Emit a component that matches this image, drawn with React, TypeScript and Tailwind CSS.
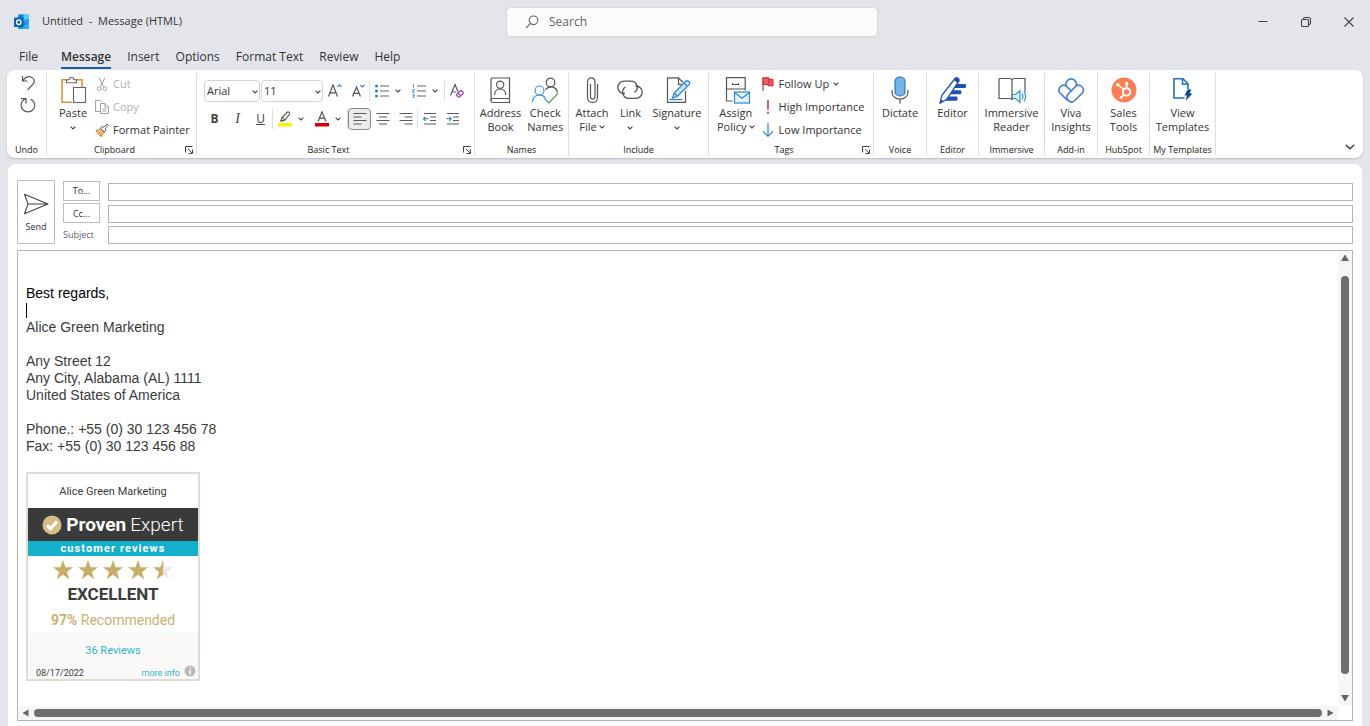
import type { ReactNode } from "react";

type IconProps = {
  className?: string;
};

const tabs = [
  "Message",
  "Insert",
  "Options",
  "Format Text",
  "Review",
  "Help",
];

function Chevron({ className = "" }: IconProps) {
  return (
    <svg
      viewBox="0 0 6 4"
      aria-hidden="true"
      className={`inline-block h-1 w-1.5 shrink-0 ${className}`}
      fill="none"
      stroke="#444"
      strokeWidth="1.1"
    >
      <path d="M.6.7 3 3 5.4.7" />
    </svg>
  );
}

function OutlookLogo() {
  return (
    <svg viewBox="0 0 16 16" className="h-4 w-4" aria-hidden="true">
      <path d="M4 1.5A1 1 0 0 1 5 .5h9a1 1 0 0 1 1 1V9H4z" fill="#28a8ea" />
      <path d="M4 1.5A1 1 0 0 1 5 .5h4.7V5H4z" fill="#0f86d8" />
      <path d="M9.7.5H14a1 1 0 0 1 1 1V5H9.700z" fill="#50d0f8" />
      <path d="M4 8l11-.5V14a1 1 0 0 1-1 1H5a1 1 0 0 1-1-1z" fill="#1490df" />
      <path d="M15 7.5 7 15h7a1 1 0 0 0 1-1z" fill="#2ab0f0" />
      <rect y="3.5" width="9.5" height="9.5" rx="1" fill="#0a62b8" />
      <ellipse
        cx="4.75"
        cy="8.2"
        rx="2.2"
        ry="2.3"
        fill="none"
        stroke="#fff"
        strokeWidth="1.3"
      />
    </svg>
  );
}

function UndoIcon() {
  return (
    <svg viewBox="0 0 16 16" className="h-4 w-4" fill="none" stroke="#555" strokeWidth="1.2">
      <path d="M2.500 1v5h5M2.700 5.800C5 2.500 8 1 11 2c3.500 1.200 4.300 4.800 2 7.200L7.500 15" />
    </svg>
  );
}

function RedoIcon() {
  return (
    <svg viewBox="0 0 16 16" className="h-4 w-4" fill="none" stroke="#555" strokeWidth="1.2">
      <path d="M1 1.600h5v5M6 1.800C2.500 3 1 5.500 1.100 8.500a6.800 6.400 0 0 0 13.600 0C14.700 5.500 13 3.200 10.500 2.200" />
    </svg>
  );
}

function PasteIcon() {
  return (
    <svg viewBox="0 0 28 28" className="h-7 w-7" fill="none">
      <path d="M8 3.800H3v22.400h10M17 3.800h6V11" stroke="#e8912d" strokeWidth="1.6" />
      <path
        d="M7.500 6.800V3.700h2.700c.2-1.500 1-2.400 2.300-2.400s2.100.9 2.300 2.400h2.700v3.100z"
        fill="#fff"
        stroke="#666"
        strokeWidth="1.1"
      />
      <rect x="14.5" y="11.5" width="12" height="15" fill="#fff" stroke="#666" strokeWidth="1.1" />
    </svg>
  );
}

function CutIcon() {
  return (
    <svg viewBox="0 0 14 14" className="h-3.5 w-3.5" fill="none" stroke="#a3a3a3">
      <path d="M4 .5 8.700 9.800M10 .5 5.300 9.800" />
      <circle cx="4.2" cy="11.6" r="1.9" />
      <circle cx="9.8" cy="11.6" r="1.9" />
    </svg>
  );
}

function CopyIcon() {
  return (
    <svg viewBox="0 0 14 14" className="h-3.5 w-3.5" fill="none" stroke="#a3a3a3">
      <path d="M5 11.500H.5V.5H5l1.500 1.500" />
      <path d="M5.500 3.500h4.500l3.500 3.500v6.500h-8zM9.800 3.500V7h3.700M7.500 9h4M7.500 11h4" />
    </svg>
  );
}

function PainterIcon() {
  return (
    <svg viewBox="0 0 14 14" className="h-3.5 w-3.5" fill="none">
      <path
        d="M1 7.500c2 0 3.500-.8 4.500-2l3.500 4c-1.200 1.200-2 2.300-2.200 4C4.500 12.500 2.500 10.500 1 7.500z"
        fill="#f7c48b"
        stroke="#d9781e"
      />
      <path d="m3.500 10 2-1.500M5.200 12l1.800-1.600" stroke="#d9781e" />
      <path d="m5.500 5.200 1.400-1.600 2 .6L12 1l1.300 1.400-3 3 .3 2L9.200 9.200z" fill="#fff" stroke="#555" />
    </svg>
  );
}

function LauncherIcon() {
  return (
    <svg viewBox="0 0 8 8" className="h-2 w-2" fill="none" stroke="#444">
      <path d="M.5 6.500v-6h7M3 3l4 4M7.500 3.500v4h-4" />
    </svg>
  );
}

function GrowFontIcon({ shrink = false }: { shrink?: boolean }) {
  return (
    <svg viewBox="0 0 16 16" className="h-4 w-4" fill="none">
      {shrink ? (
        <>
          <path d="M2.500 13.500 6.500 4l4 9.500M4 10.300h5" stroke="#555" strokeWidth="1.2" />
          <path d="m10.500 2 2 2 2-2" stroke="#2b7fc4" strokeWidth="1.1" />
        </>
      ) : (
        <>
          <path d="M1.500 13.500 6 2l4.500 11.500M3.100 9.800h5.800" stroke="#555" strokeWidth="1.2" />
          <path d="m10.500 3.800 2-2 2 2" stroke="#2b7fc4" strokeWidth="1.1" />
        </>
      )}
    </svg>
  );
}

function BulletsIcon() {
  return (
    <svg viewBox="0 0 14 14" className="h-3.5 w-3.5">
      <path d="M5 2h9M5 7h9M5 12h9" stroke="#666" strokeWidth="1.2" />
      <g fill="#2b7fc4">
        <circle cx="1.5" cy="2" r="1.5" />
        <circle cx="1.5" cy="7" r="1.5" />
        <circle cx="1.5" cy="12" r="1.5" />
      </g>
    </svg>
  );
}

function NumberingIcon() {
  return (
    <svg viewBox="0 0 14 14" className="h-3.5 w-3.5" fill="none">
      <path d="M5 2h9M5 7h9M5 12h9" stroke="#666" strokeWidth="1.2" />
      <path
        d="M.6.8 1.600.3v3.400M.5 5.500h1.600v1.400H.7v1.500h1.600M.5 10.300h1.700v1.500H.8M2.200 11.800v1.700H.5"
        stroke="#2b7fc4"
        strokeWidth=".8"
      />
    </svg>
  );
}

function ClearFormatIcon() {
  return (
    <svg viewBox="0 0 16 16" className="h-4 w-4" fill="none">
      <path d="M1.500 12.500 6 1.500l3 7M3.200 9h4.200" stroke="#555" strokeWidth="1.2" />
      <path
        d="M7.200 11.800 11 8q.9-.9 1.800 0l1 1q.9.9 0 1.800L10.500 14H9zM9 10l3 3"
        stroke="#9b3fb0"
        strokeWidth="1.2"
      />
    </svg>
  );
}

function HighlightIcon() {
  return (
    <svg viewBox="0 0 16 16" className="h-4 w-4" fill="none">
      <path
        d="m4 10 1-3.500L10.500 1c.8-.6 2.600.8 2 2L8 9l-2.500 1zM5.200 6.500l2.700 2.400"
        stroke="#555"
        strokeWidth="1.1"
      />
      <path d="m2.500 10.500 2-2 2 1.600z" fill="#555" />
      <path d="M1 12h14v3.500H1z" fill="#fdf000" />
    </svg>
  );
}

function FontColorIcon() {
  return (
    <svg viewBox="0 0 16 16" className="h-4 w-4" fill="none">
      <path d="M4 10.500 8 .8l4 9.700M5.400 7.200h5.200" stroke="#555" strokeWidth="1.2" />
      <path d="M1 12h14v3.500H1z" fill="#d9000d" />
    </svg>
  );
}

function AlignIcon({ d }: { d: string }) {
  return (
    <svg viewBox="0 0 14 14" className="h-3.5 w-3.5" fill="none" stroke="#5a5a5a" strokeWidth="1.1">
      <path d={d} />
    </svg>
  );
}

function IndentIcon({ arrow }: { arrow: string }) {
  return (
    <svg viewBox="0 0 14 14" className="h-3.5 w-3.5" fill="none" strokeWidth="1.1">
      <path d="M1 1.500h12M7 5h6M7 8.500h6M1 12h12" stroke="#5a5a5a" />
      <path d={arrow} stroke="#2b7fc4" />
    </svg>
  );
}

function AddressBookIcon() {
  return (
    <svg viewBox="0 0 28 28" className="h-7 w-7" fill="none" stroke="#555" strokeWidth="1.2">
      <path d="M5 24V3.500c0-1 .8-1.500 1.500-1.500h17v24.500H7A2 2 0 0 1 5 24.500c0-1.500 1-2 2-2h16.500" />
      <circle cx="14.2" cy="8.7" r="3.6" />
      <path d="M8.500 19c.3-4 2.300-6 5.700-6s5.400 2 5.700 6" />
    </svg>
  );
}

function CheckNamesIcon() {
  return (
    <svg viewBox="0 0 28 28" className="h-7 w-7" fill="none" strokeWidth="1.2">
      <circle cx="19.5" cy="6.5" r="4.3" stroke="#555" />
      <path d="M14.500 13.500c3-3.500 8-3.500 10.500-.5.800 1 1.300 2.200 1.500 3.500" stroke="#555" />
      <circle cx="8.5" cy="14.5" r="4.5" stroke="#3a8dd4" />
      <path d="M1.500 26c.3-4.500 3-7 7-7 2.500 0 4.500 1 5.700 3" stroke="#3a8dd4" />
      <path d="m13.500 22.500 4.300 4.300L27 17.500" stroke="#4c9a55" />
    </svg>
  );
}

function AttachIcon() {
  return (
    <svg viewBox="0 0 28 28" className="h-7 w-7" fill="none" stroke="#555" strokeWidth="1.2">
      <path d="M19.500 8v13.500c0 6.700-10 6.700-10 0V6c0-5.500 7.500-5.500 7.500 0v14.500c0 3.300-4.500 3.300-4.500 0V8" />
    </svg>
  );
}

function LinkIcon() {
  return (
    <svg viewBox="0 0 28 28" className="h-7 w-7" fill="none" stroke="#555" strokeWidth="1.3">
      <path d="M9 17.500H8a6.200 6.200 0 0 1 0-12.400h7a6.200 6.200 0 0 1 3.500 11.300" />
      <path d="M19.500 10H20a6.200 6.200 0 0 1 0 12.400h-7A6.200 6.200 0 0 1 9.500 11" />
    </svg>
  );
}

function SignatureIcon() {
  return (
    <svg viewBox="0 0 28 28" className="h-7 w-7" fill="none" strokeWidth="1.2">
      <path d="M22.500 15v11.400h-18V1.800h11l4.500 4.700M15.500 1.800v6.500h3" stroke="#555" />
      <path
        d="m9.500 22 1.600-5L23 5c1.500-1.300 4.800 1.500 3.300 3.300L14.500 20.200zM21 7l3.300 3.300M11 17l3.500 3.200"
        fill="#cfe5f7"
        stroke="#2b83cc"
      />
      <path d="M6.500 23.500h13" stroke="#2b83cc" />
    </svg>
  );
}

function PolicyIcon() {
  return (
    <svg viewBox="0 0 28 28" className="h-7 w-7" fill="none" strokeWidth="1.2">
      <path d="M10.500 25H4.500V1.600h18.700v13M4.500 13h18.700M10.500 7v1.500h6V7" stroke="#555" />
      <rect x="12.5" y="16" width="15" height="11" fill="#e5f3fc" stroke="#2b8ad0" />
      <path d="m12.500 16.500 7.500 5.700 7.500-5.700" stroke="#2b8ad0" />
    </svg>
  );
}

function FlagIcon() {
  return (
    <svg viewBox="0 0 14 14" className="h-3.5 w-3.5" fill="none">
      <path d="M2 .5V14" stroke="#9c3540" strokeWidth="1.1" />
      <path d="M2 .8h6v1.500h4v6.500H7V7.500H2z" fill="#ef5c62" stroke="#cf2932" />
      <path d="M8 2.300V7" stroke="#cf2932" />
    </svg>
  );
}

function HighIcon() {
  return (
    <svg viewBox="0 0 14 14" className="h-3.5 w-3.5" fill="none" stroke="#d0393f" strokeWidth="1.6">
      <path d="M7 0v9.700M7 11.800V14" />
    </svg>
  );
}

function LowIcon() {
  return (
    <svg viewBox="0 0 14 14" className="h-3.5 w-3.5" fill="none" stroke="#2b83cc" strokeWidth="1.2">
      <path d="M7 0v13M2 8.300l5 5 5-5" />
    </svg>
  );
}

function DictateIcon() {
  return (
    <svg viewBox="0 0 28 28" className="h-7 w-7" fill="none" strokeWidth="1.2">
      <rect x="9" y="1" width="10" height="19" rx="4.5" fill="#74b5e8" stroke="#2b78b8" />
      <path d="M6 14v2c0 9.500 16 9.500 16 0v-2M14 23.200v4.300" stroke="#555" />
    </svg>
  );
}

function EditorIcon() {
  return (
    <svg viewBox="0 0 28 28" className="h-7 w-7" fill="none">
      <path
        d="M17 8h9c1.500 0 1.500 4 0 4H14zM12.500 14.200h8.800c1.500 0 1.500 4 0 4h-12zM8.500 20.500h9c1.500 0 1.500 4.200 0 4.200H5z"
        fill="#1d4fb4"
      />
      <path
        d="m1 27 1.800-7.500L16 2.500c1.500-1.800 5 .5 3.800 2.700L7.500 23.500z"
        fill="#fff"
        stroke="#1d4fb4"
        strokeWidth="1.3"
      />
      <path d="m1 27 .9-3.500 2.300 1.600zM15.500 3c1.700-2.300 5.700.3 4.400 2.500l-1 1.500L14.500 4z" fill="#1d4fb4" />
    </svg>
  );
}

function ReaderIcon() {
  return (
    <svg viewBox="0 0 28 28" className="h-7 w-7" fill="none" strokeWidth="1.2">
      <path
        d="M1 2.500h10c1.700 0 3 .8 3 2 0-1.200 1.300-2 3-2h10v13M14 4.500v19M14 24c0-1-1.300-1.500-3-1.500H1v-20"
        stroke="#555"
      />
      <path d="M14.500 18.500h3l4.500-4v12l-4.500-4h-3z" fill="#dff1fb" stroke="#2f94c4" />
      <path d="M24 17.500c1.200 2 1.200 4 0 6M26 15.500c2 3 2 7 0 10" stroke="#2f94c4" />
    </svg>
  );
}

function VivaIcon() {
  return (
    <svg viewBox="0 0 28 28" className="h-7 w-7" fill="none" stroke="#4b80dc" strokeWidth="1.7">
      <path d="M18.300 24 L25.300 17 A4.700 4.700 0 0 0 18.700 10.400 L10.900 18.200 A4.700 4.700 0 0 0 17.500 24.800z" />
      <path d="M10.800 24.700 3 17A4.700 4.700 0 0 1 9.600 10.400L14.200 14.900" />
      <path d="M9.200 10.100A5.300 5.300 0 1 1 19.100 10.100" />
    </svg>
  );
}

function HubSpotIcon() {
  return (
    <svg viewBox="0 0 28 28" className="h-7 w-7" fill="none">
      <circle cx="14" cy="14" r="12.5" fill="#fa8058" />
      <circle cx="16.5" cy="16" r="3.7" stroke="#fff" strokeWidth="2" />
      <path d="m8 9 6 4.500M16.700 12V8M13.800 19l-2.500 2.500" stroke="#fff" strokeWidth="1.5" />
      <g fill="#fff">
        <circle cx="7.8" cy="8.8" r="1.7" />
        <circle cx="16.7" cy="7.3" r="1.6" />
        <circle cx="11" cy="21.6" r="1.3" />
      </g>
    </svg>
  );
}

function TemplatesIcon() {
  return (
    <svg viewBox="0 0 28 28" className="h-7 w-7" fill="none">
      <path d="M16.500 22H6V2.800h9l5 5V13M14.500 3v5.300h5.300" stroke="#2472b8" strokeWidth="1.6" />
      <path d="M19.500 13.500h3.800l-1.500 4h2.700l-7 7.500 1.500-5.500h-2.500z" fill="#0f4c8c" />
    </svg>
  );
}

function SendIcon() {
  return (
    <svg viewBox="0 0 26 22" className="h-[22px] w-[26px]" fill="none" stroke="#444" strokeWidth="1.1">
      <path d="M1.500 1.200 25 11 1.500 20.800 5 11zM5 11h20" strokeLinejoin="round" />
    </svg>
  );
}

type GroupProps = {
  label: string;
  className: string;
  launcher?: boolean;
  children: ReactNode;
};

function Group({ label, className, launcher = false, children }: GroupProps) {
  return (
    <section
      aria-label={label}
      className={`flex shrink-0 flex-col border-r border-[#dedede] ${className}`}
    >
      <div className="flex flex-1 justify-center">{children}</div>
      <div className="flex h-3 items-center">
        <span className="flex-1 text-center text-[9px] leading-3 whitespace-nowrap text-[#222]">
          {label}
        </span>
        {launcher && (
          <button
            type="button"
            aria-label={`${label} settings`}
            className="flex w-3.5 justify-center"
          >
            <LauncherIcon />
          </button>
        )}
      </div>
    </section>
  );
}

type BigButtonProps = {
  icon: ReactNode;
  lines: string[];
  menu?: "inline" | "below";
};

function BigButton({ icon, lines, menu }: BigButtonProps) {
  return (
    <button
      type="button"
      className="flex flex-col items-center pt-[3px] text-[11px] leading-[14px] whitespace-nowrap"
    >
      {icon}
      <span className="mt-0.5 flex flex-col items-center">
        {lines.map((line, index) => (
          <span key={line} className="flex items-center gap-0.5">
            {line}
            {menu === "inline" && index === lines.length - 1 && <Chevron />}
          </span>
        ))}
        {menu === "below" && <Chevron className="mt-1.5" />}
      </span>
    </button>
  );
}

type SmallButtonProps = {
  icon: ReactNode;
  label: string;
  disabled?: boolean;
  menu?: boolean;
};

function SmallButton({ icon, label, disabled, menu }: SmallButtonProps) {
  return (
    <button
      type="button"
      disabled={disabled}
      className="flex h-[22px] items-center gap-1 text-[11px] whitespace-nowrap disabled:text-[#b0b0b0]"
    >
      {icon}
      {label}
      {menu && <Chevron />}
    </button>
  );
}

type ToolButtonProps = {
  label: string;
  active?: boolean;
  children: ReactNode;
};

function ToolButton({ label, active, children }: ToolButtonProps) {
  return (
    <button
      type="button"
      aria-label={label}
      aria-pressed={active}
      className={`flex h-[22px] w-[23px] items-center justify-center rounded text-xs text-[#444] ${
        active ? "border border-[#8a8a8a] bg-[#ececec]" : ""
      }`}
    >
      {children}
    </button>
  );
}

function MenuButton({ label }: { label: string }) {
  return (
    <button
      type="button"
      aria-label={label}
      className="flex h-[22px] w-3.5 items-center pl-0.5"
    >
      <Chevron />
    </button>
  );
}

function Divider() {
  return <span className="h-5 w-px bg-[#dedede]" />;
}

type RibbonSelectProps = {
  label: string;
  value: string;
  className: string;
};

function RibbonSelect({ label, value, className }: RibbonSelectProps) {
  return (
    <span className={`relative flex ${className}`}>
      <select
        aria-label={label}
        defaultValue={value}
        className="h-[22px] w-full appearance-none rounded border border-[#d4d4d4] bg-white pl-0.5 text-[11px]"
      >
        <option>{value}</option>
      </select>
      <Chevron className="pointer-events-none absolute top-2.5 right-0.5" />
    </span>
  );
}

function TitleBar() {
  return (
    <header className="grid h-[43px] grid-cols-[1fr_370px_1fr] items-center pl-3.5">
      <div className="flex items-center gap-3">
        <OutlookLogo />
        <h1 className="text-[11px] whitespace-pre">
          {"Untitled  -  Message (HTML)"}
        </h1>
      </div>

      <label className="flex h-7 items-center gap-2.5 rounded-sm bg-[#fafbfb] px-[18px] shadow-[0_0_2px_#b5b8be]">
        <svg viewBox="0 0 14 14" className="h-3.5 w-3.5" fill="none" stroke="#666" strokeWidth="1.1">
          <circle cx="8.5" cy="5.3" r="4.3" />
          <path d="M5.400 8.500.8 13.200" />
        </svg>
        <input
          type="search"
          aria-label="Search"
          placeholder="Search"
          className="min-w-0 flex-1 bg-transparent text-xs outline-none placeholder:text-[#666]"
        />
      </label>

      <div className="flex items-center justify-end">
        <button type="button" aria-label="Minimize" className="flex w-[43px] justify-center">
          <svg viewBox="0 0 12 12" className="h-3 w-3" stroke="#444">
            <path d="M1.500 5.500h9" />
          </svg>
        </button>
        <button type="button" aria-label="Restore" className="flex w-[43px] justify-center">
          <svg viewBox="0 0 12 12" className="h-3 w-3" fill="none" stroke="#444" strokeWidth="1.1">
            <rect x="1.5" y="3.5" width="7" height="7" rx="1" />
            <path d="M3.500 3.200V3c0-.8.700-1.500 1.500-1.500h3.500c1.100 0 2 .9 2 2V7c0 .8-.7 1.500-1.500 1.500h-.3" />
          </svg>
        </button>
        <button type="button" aria-label="Close" className="flex w-[43px] justify-center">
          <svg viewBox="0 0 12 12" className="h-3 w-3" stroke="#444" strokeWidth="1.1">
            <path d="m1.500 1.500 9 9M10.500 1.500l-9 9" />
          </svg>
        </button>
      </div>
    </header>
  );
}

function RibbonTabs() {
  return (
    <nav className="flex h-[27px] items-start gap-4 pt-1 pl-[19px] text-xs leading-5">
      <button type="button" className="mr-[7px]">
        File
      </button>
      {tabs.map((tab) => (
        <button
          key={tab}
          type="button"
          className={
            tab === "Message"
              ? "border-b-2 border-[#185fb0] font-semibold"
              : ""
          }
        >
          {tab}
        </button>
      ))}
    </nav>
  );
}

function BasicTextGroup() {
  return (
    <Group label="Basic Text" className="w-[278px]" launcher>
      <div className="flex flex-1 flex-col gap-1.5 pt-[7px] pl-1.5">
        <div className="flex items-center pl-px">
          <RibbonSelect label="Font" value="Arial" className="mr-px w-14" />
          <RibbonSelect label="Font size" value="11" className="w-[62px]" />
          <ToolButton label="Increase font size">
            <GrowFontIcon />
          </ToolButton>
          <ToolButton label="Decrease font size">
            <GrowFontIcon shrink />
          </ToolButton>
          <Divider />
          <ToolButton label="Bullets">
            <BulletsIcon />
          </ToolButton>
          <MenuButton label="Bullet styles" />
          <ToolButton label="Numbering">
            <NumberingIcon />
          </ToolButton>
          <MenuButton label="Numbering styles" />
          <Divider />
          <ToolButton label="Clear formatting">
            <ClearFormatIcon />
          </ToolButton>
        </div>

        <div className="flex items-center">
          <ToolButton label="Bold">
            <b>B</b>
          </ToolButton>
          <ToolButton label="Italic">
            <i className="font-['Liberation_Serif',serif] text-sm">I</i>
          </ToolButton>
          <ToolButton label="Underline">
            <u>U</u>
          </ToolButton>
          <Divider />
          <ToolButton label="Highlight">
            <HighlightIcon />
          </ToolButton>
          <MenuButton label="Highlight colors" />
          <ToolButton label="Font color">
            <FontColorIcon />
          </ToolButton>
          <MenuButton label="Font colors" />
          <Divider />
          <ToolButton label="Align left" active>
            <AlignIcon d="M.5 1.500h13M.5 5h8M.5 8.500h13M.5 12h8" />
          </ToolButton>
          <ToolButton label="Center">
            <AlignIcon d="M.5 1.500h13M3 5h8M.5 8.500h13M3 12h8" />
          </ToolButton>
          <ToolButton label="Align right">
            <AlignIcon d="M.5 1.500h13M5.500 5h8M.5 8.500h13M5.500 12h8" />
          </ToolButton>
          <Divider />
          <ToolButton label="Decrease indent">
            <IndentIcon arrow="M5.500 6.800h-5M2.500 4.800l-2 2 2 2" />
          </ToolButton>
          <ToolButton label="Increase indent">
            <IndentIcon arrow="M.3 6.800h5M3.300 4.800l2 2-2 2" />
          </ToolButton>
        </div>
      </div>
    </Group>
  );
}

function Ribbon() {
  return (
    <div className="mx-[7px] flex h-[88px] rounded-lg bg-white pt-[3px] pb-0.5 shadow-[0_1px_2px_#b9bbc2]">
      <Group label="Undo" className="w-10">
        <div className="flex flex-col gap-1.5 pt-0.5 pl-0.5">
          <button type="button" aria-label="Undo">
            <UndoIcon />
          </button>
          <button type="button" aria-label="Redo">
            <RedoIcon />
          </button>
        </div>
      </Group>

      <Group label="Clipboard" className="w-[150px]" launcher>
        <div className="flex flex-1 gap-2 pl-3">
          <BigButton icon={<PasteIcon />} lines={["Paste"]} menu="below" />
          <div className="flex flex-col gap-px">
            <SmallButton icon={<CutIcon />} label="Cut" disabled />
            <SmallButton icon={<CopyIcon />} label="Copy" disabled />
            <SmallButton icon={<PainterIcon />} label="Format Painter" />
          </div>
        </div>
      </Group>

      <BasicTextGroup />

      <Group label="Names" className="w-[94px]">
        <div className="flex gap-1.5">
          <BigButton icon={<AddressBookIcon />} lines={["Address", "Book"]} />
          <BigButton icon={<CheckNamesIcon />} lines={["Check", "Names"]} />
        </div>
      </Group>

      <Group label="Include" className="w-[140px]">
        <div className="flex gap-2">
          <BigButton icon={<AttachIcon />} lines={["Attach", "File"]} menu="inline" />
          <BigButton icon={<LinkIcon />} lines={["Link"]} menu="below" />
          <BigButton icon={<SignatureIcon />} lines={["Signature"]} menu="below" />
        </div>
      </Group>

      <Group label="Tags" className="w-[165px]" launcher>
        <div className="flex flex-1 gap-1.5 pl-2">
          <BigButton icon={<PolicyIcon />} lines={["Assign", "Policy"]} menu="inline" />
          <div className="flex flex-col gap-px">
            <SmallButton icon={<FlagIcon />} label="Follow Up" menu />
            <SmallButton icon={<HighIcon />} label="High Importance" />
            <SmallButton icon={<LowIcon />} label="Low Importance" />
          </div>
        </div>
      </Group>

      <Group label="Voice" className="w-[53px]">
        <BigButton icon={<DictateIcon />} lines={["Dictate"]} />
      </Group>
      <Group label="Editor" className="w-[52px]">
        <BigButton icon={<EditorIcon />} lines={["Editor"]} />
      </Group>
      <Group label="Immersive" className="w-[66px]">
        <BigButton icon={<ReaderIcon />} lines={["Immersive", "Reader"]} />
      </Group>
      <Group label="Add-in" className="w-[53px]">
        <BigButton icon={<VivaIcon />} lines={["Viva", "Insights"]} />
      </Group>
      <Group label="HubSpot" className="w-[52px]">
        <BigButton icon={<HubSpotIcon />} lines={["Sales", "Tools"]} />
      </Group>
      <Group label="My Templates" className="w-[66px]">
        <BigButton icon={<TemplatesIcon />} lines={["View", "Templates"]} />
      </Group>

      <button
        type="button"
        aria-label="Collapse ribbon"
        className="mr-2 mb-1.5 ml-auto self-end"
      >
        <svg viewBox="0 0 10 6" className="h-1.5 w-2.5" fill="none" stroke="#333" strokeWidth="1.2">
          <path d="m.8.8 4.200 4 4.200-4" />
        </svg>
      </button>
    </div>
  );
}

function MessageFields() {
  return (
    <div className="flex gap-2">
      <button
        type="button"
        className="flex h-16 w-[38px] flex-col items-center gap-1.5 border border-[#bdbdbd] pt-3 text-[9px] leading-3"
      >
        <SendIcon />
        Send
      </button>

      <div className="grid flex-1 grid-cols-[37px_1fr] items-end gap-x-2 gap-y-0.5 text-[9px]">
        <button type="button" className="h-5 border border-[#bdbdbd]">
          To...
        </button>
        <input aria-label="To" className="h-[18px] w-full border border-[#b5b5b5] px-1 text-xs outline-none" />
        <button type="button" className="h-5 border border-[#bdbdbd]">
          Cc...
        </button>
        <input aria-label="Cc" className="h-[18px] w-full border border-[#b5b5b5] px-1 text-xs outline-none" />
        <label htmlFor="subject" className="leading-[18px] text-[#666]">
          Subject
        </label>
        <input id="subject" className="h-[18px] w-full border border-[#b5b5b5] px-1 text-xs outline-none" />
      </div>
    </div>
  );
}

const starPath =
  "M10 0l2.500 7.200 7.500.1-6 4.600 2.200 7.300L10 14.800l-6.200 4.400L6 11.900 0 7.300l7.500-.1z";

function Stars() {
  return (
    <div className="flex gap-[5px]" role="img" aria-label="4.5 of 5 stars">
      {[1, 2, 3, 4].map((star) => (
        <svg key={star} viewBox="0 0 20 20" className="h-5 w-5">
          <path d={starPath} fill="#c8ae68" />
        </svg>
      ))}
      <svg viewBox="0 0 20 20" className="h-5 w-5">
        <path d={starPath} fill="#e8e8ea" />
        <path d="M10 0v14.800l-6.200 4.400L6 11.900 0 7.300l7.500-.1z" fill="#c8ae68" />
      </svg>
    </div>
  );
}

function ReviewBadge() {
  return (
    <div className="flex h-[209px] w-[174px] flex-col border-2 border-[#dfdcd3] text-center font-['Roboto',sans-serif] text-[#3c3c3c]">
      <p className="pt-2.5 pb-2 text-[11px] leading-4">Alice Green Marketing</p>
      <div className="flex h-[33px] items-center justify-center gap-1 bg-[#3a3a3a] text-[19px] text-white">
        <svg viewBox="0 0 20 20" className="h-5 w-5" fill="none">
          <circle cx="10" cy="10" r="9.5" fill="#d3bd84" />
          <path d="m5 10.200 3.500 3.500L15 6.500" stroke="#fff" strokeWidth="3" />
        </svg>
        <span className="flex gap-1">
          <b>Proven</b>
          <span className="font-light">Expert</span>
        </span>
      </div>
      <p className="bg-[#12b0cd] text-[11px] leading-[15px] font-bold tracking-widest text-white">
        customer reviews
      </p>
      <div className="flex flex-col items-center pt-1">
        <Stars />
        <p className="text-[17px] leading-7 font-bold">EXCELLENT</p>
        <p className="text-sm leading-6 text-[#cbb271]">
          <b>97%</b> Recommended
        </p>
      </div>
      <div className="mt-auto flex h-[46px] flex-col justify-between bg-[#faf9f7]">
        <a href="#reviews" className="pt-2.5 text-[11px] leading-4 text-[#2fb4c8]">
          36 Reviews
        </a>
        <div className="flex items-end justify-between pr-0.5 pl-2 text-[9px] leading-3">
          <span>08/17/2022</span>
          <a href="#info" className="flex items-end gap-1 text-[#2fb4c8]">
            more info
            <svg viewBox="0 0 12 12" className="mb-0.5 h-3 w-3">
              <circle cx="6" cy="6" r="5.5" fill="#b9b9b9" />
              <path d="M6 2.500V4M6 5v4.500" stroke="#fff" strokeWidth="1.4" />
            </svg>
          </a>
        </div>
      </div>
    </div>
  );
}

function Arrow({ d }: { d: string }) {
  return (
    <svg viewBox="0 0 8 8" className="h-2 w-2 shrink-0" fill="#666">
      <path d={d} />
    </svg>
  );
}

function MessageBody() {
  return (
    <div className="mt-1.5 flex flex-1 border border-[#b5b5b5]">
      <div className="flex min-w-0 flex-1 flex-col">
        <div
          role="textbox"
          aria-label="Message body"
          aria-multiline="true"
          className="flex-1 pt-[34px] pl-2 font-['Liberation_Sans',Arial,sans-serif] text-sm leading-[17px] text-[#3a3a3a]"
        >
          <p className="text-black">Best regards,</p>
          <div className="my-px h-[15px] w-px bg-black" />
          <p>Alice Green Marketing</p>
          <br />
          <p>Any Street 12</p>
          <p>Any City, Alabama (AL) 1111</p>
          <p>United States of America</p>
          <br />
          <p>Phone.: +55 (0) 30 123 456 78</p>
          <p className="mb-[17px]">Fax: +55 (0) 30 123 456 88</p>
          <ReviewBadge />
        </div>

        <div className="flex h-3.5 items-center gap-1 bg-[#f6f6f6] px-1">
          <Arrow d="M6.500.5v7L.5 4z" />
          <span className="h-2 flex-1 rounded-full bg-[#6e6e6e]" />
          <Arrow d="M1.500.5v7l6-3.500z" />
        </div>
      </div>

      <div className="mb-[15px] flex w-3.5 flex-col items-center gap-3.5 bg-[#f6f6f6] py-[3px]">
        <Arrow d="M0 7h8L4 .5z" />
        <span className="w-2 flex-1 rounded-full bg-[#6e6e6e]" />
        <span className="flex h-3.5 items-end">
          <Arrow d="M0 1h8L4 7.500z" />
        </span>
      </div>
    </div>
  );
}

export default function App() {
  return (
    <div className="flex min-h-screen flex-col bg-[#e3e5eb] font-['Open_Sans','Segoe_UI',sans-serif] text-[#333]">
      <TitleBar />
      <RibbonTabs />
      <Ribbon />
      <main className="mx-2 mt-1.5 flex flex-1 flex-col rounded-t-lg bg-white px-[9px] pt-4 pb-[5px]">
        <MessageFields />
        <MessageBody />
      </main>
    </div>
  );
}
